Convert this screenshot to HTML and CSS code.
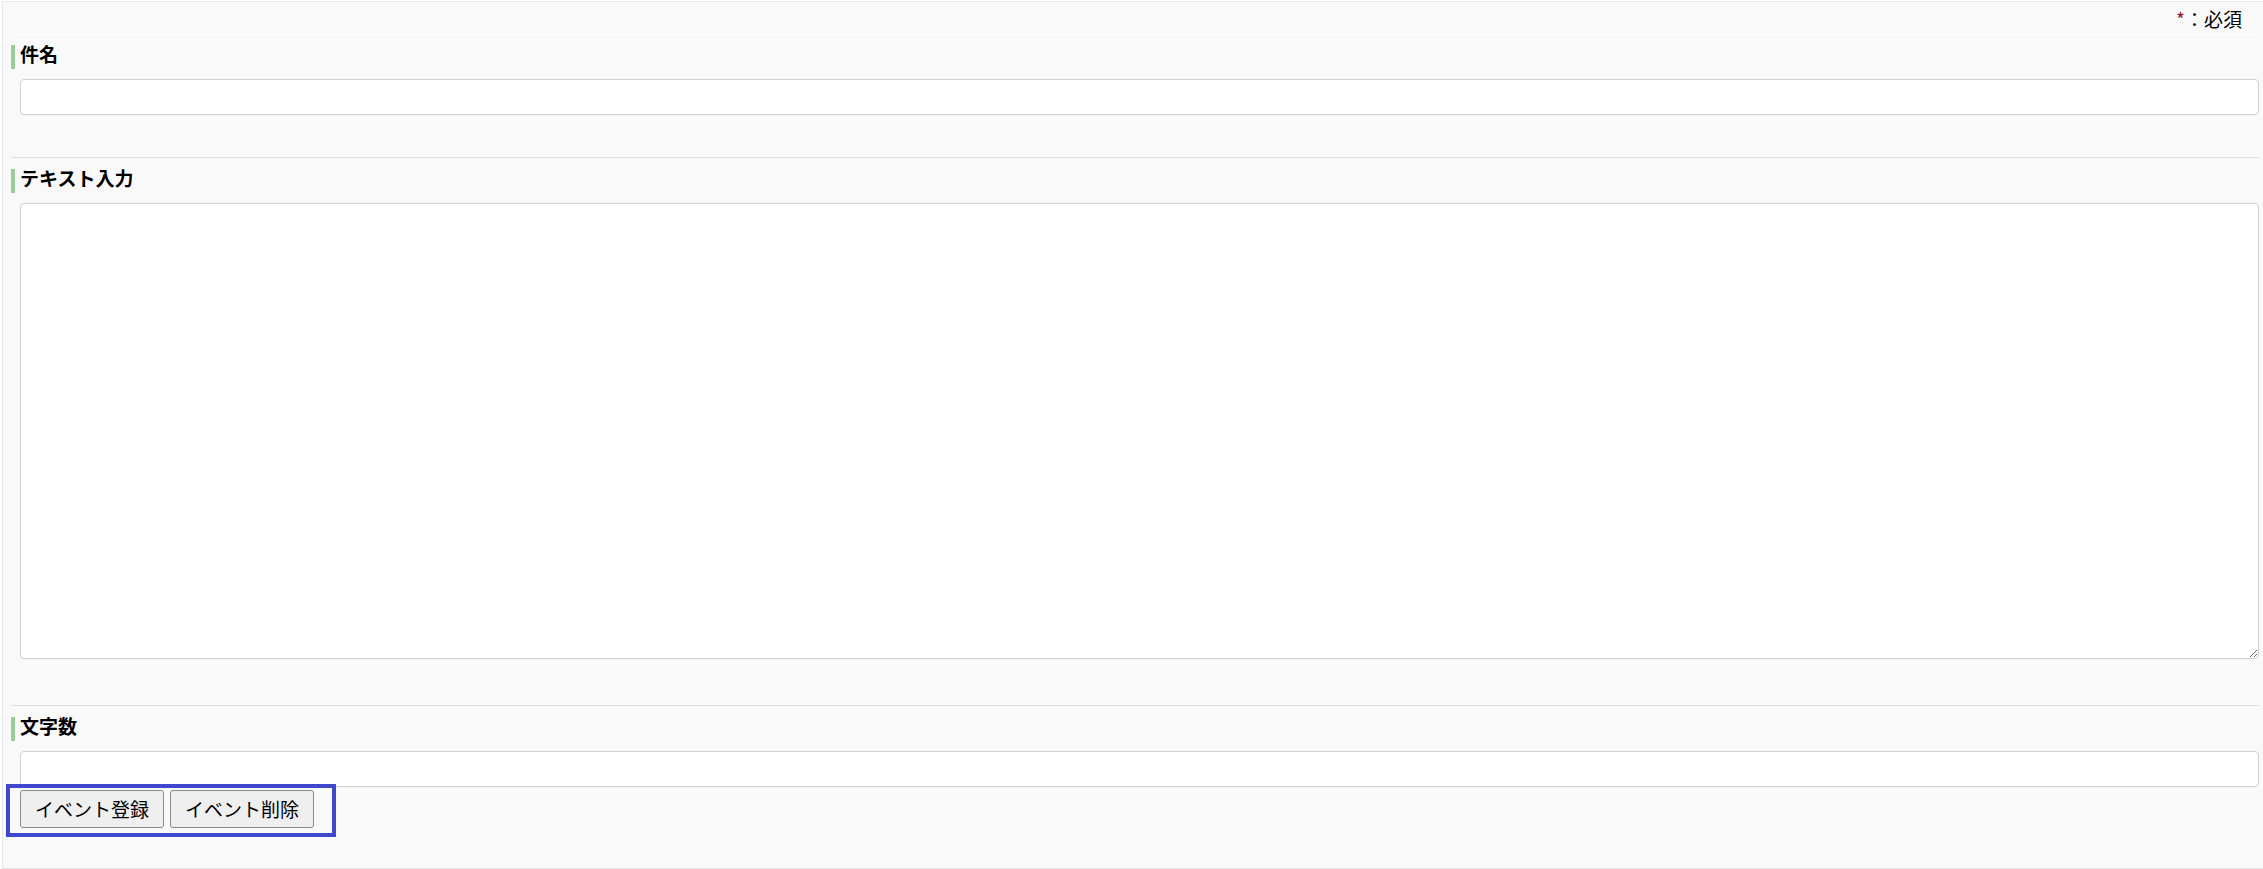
FILE: index.html
```html
<!DOCTYPE html>
<html lang="ja">
<head>
<meta charset="utf-8">
<title>フォーム</title>
<link rel="stylesheet" href="styles.css">
</head>
<body>
<div class="page">
  <div class="form">
    <div class="required-row"><span class="req">*</span>：必須</div>
    <div class="section section-first">
      <div class="label">件名</div>
      <div class="field"><input type="text" class="text-input"></div>
    </div>
    <div class="section section-text">
      <div class="label">テキスト入力</div>
      <div class="field"><textarea class="textarea"></textarea></div>
    </div>
    <div class="section section-last">
      <div class="label">文字数</div>
      <div class="field">
        <input type="text" class="text-input">
        <div class="buttons">
          <button type="button" class="btn">イベント登録</button>
          <button type="button" class="btn">イベント削除</button>
          <div class="highlight"></div>
        </div>
      </div>
    </div>
  </div>
</div>
</body>
</html>
```

FILE: styles.css
```css
html, body {
  margin: 0;
  padding: 0;
  background: #ffffff;
}
body {
  font-family: "Noto Sans CJK JP", "Noto Sans", sans-serif;
  color: #000;
}
.page {
  margin: 1px 0 0 2px;
  border-top: 1px solid #e8e8e8;
  border-left: 1px solid #e8e8e8;
  border-bottom: 1px solid #e3e3e3;
  background: #f9f9f9;
}
.form {
  margin: 0 4px 0 8px;
}
.required-row {
  text-align: right;
  font-size: 19px;
  line-height: 22px;
  padding: 6px 17px 4px 0;
  height: 22px;
}
.req {
  color: #8a1a2a;
}
.section {
  border-top: 1px solid #dedede;
  padding-top: 11px;
}
.section-first {
  border-top-color: #ffffff;
  padding-top: 10px;
  padding-bottom: 42px;
}
.section-text {
  padding-bottom: 46px;
}
.section-last {
  padding-bottom: 40px;
}
.label {
  border-left: 4px solid #9acd9a;
  padding-left: 5px;
  height: 18px;
  line-height: 18px;
  padding-bottom: 6px;
  font-size: 19px;
  font-weight: bold;
}
.field {
  padding-left: 9px;
  margin-top: 10px;
}
.text-input {
  display: block;
  box-sizing: border-box;
  width: 100%;
  height: 36px;
  margin: 0;
  border: 1px solid #cfcfcf;
  border-radius: 4px;
  background: #fff;
  font-size: 19px;
  font-family: inherit;
}
.textarea {
  display: block;
  box-sizing: border-box;
  width: 100%;
  height: 456px;
  margin: 0;
  border: 1px solid #cfcfcf;
  border-radius: 4px;
  background: #fff;
  font-family: inherit;
  font-size: 19px;
}
.buttons {
  position: relative;
  display: inline-flex;
  gap: 6px;
  margin-top: 3px;
  vertical-align: top;
}
.btn {
  height: 38px;
  padding: 0 14px;
  margin: 0;
  border: 1px solid #8a8a8a;
  border-radius: 3px;
  background: #efefef;
  color: #000;
  font-family: "Noto Sans CJK JP", sans-serif;
  font-size: 19px;
  line-height: 34px;
}
.highlight {
  position: absolute;
  left: -14px;
  top: -6px;
  right: -22px;
  bottom: -9px;
  border: 4px solid #3f48cc;
  pointer-events: none;
}
```
